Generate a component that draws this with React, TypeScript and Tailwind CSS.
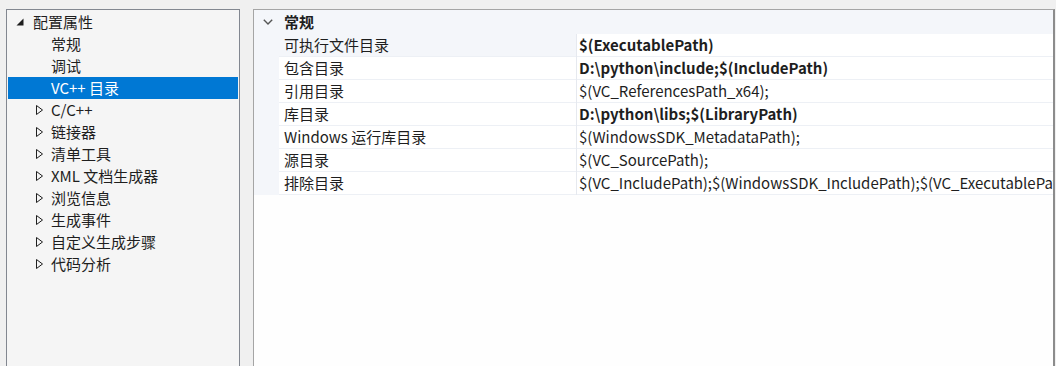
import React from "react";

const font = { fontFamily: '"Noto Sans CJK SC", sans-serif' };

type TreeItem = { label: string; kind: "root" | "child" | "selected" | "collapsed" };

const tree: TreeItem[] = [
  { label: "配置属性", kind: "root" },
  { label: "常规", kind: "child" },
  { label: "调试", kind: "child" },
  { label: "VC++ 目录", kind: "selected" },
  { label: "C/C++", kind: "collapsed" },
  { label: "链接器", kind: "collapsed" },
  { label: "清单工具", kind: "collapsed" },
  { label: "XML 文档生成器", kind: "collapsed" },
  { label: "浏览信息", kind: "collapsed" },
  { label: "生成事件", kind: "collapsed" },
  { label: "自定义生成步骤", kind: "collapsed" },
  { label: "代码分析", kind: "collapsed" },
];

const rows: { label: string; value: string; bold: boolean; hl?: boolean }[] = [
  { label: "可执行文件目录", value: "$(ExecutablePath)", bold: true, hl: true },
  { label: "包含目录", value: "D:\\python\\include;$(IncludePath)", bold: true },
  { label: "引用目录", value: "$(VC_ReferencesPath_x64);", bold: false },
  { label: "库目录", value: "D:\\python\\libs;$(LibraryPath)", bold: true },
  { label: "Windows 运行库目录", value: "$(WindowsSDK_MetadataPath);", bold: false },
  { label: "源目录", value: "$(VC_SourcePath);", bold: false },
  {
    label: "排除目录",
    value: "$(VC_IncludePath);$(WindowsSDK_IncludePath);$(VC_ExecutablePath_x64);$(VC_LibraryPath_x64)",
    bold: false,
  },
];

function RootTri() {
  return (
    <svg width="8" height="8" viewBox="0 0 8 8" className="shrink-0">
      <polygon points="7.5,0.5 7.5,7.5 0.5,7.5" fill="#1e1e1e" />
    </svg>
  );
}

function CollapsedTri() {
  return (
    <svg width="8" height="10" viewBox="0 0 8 10" className="shrink-0">
      <polygon points="0.5,0.5 6.5,5 0.5,9.5" fill="none" stroke="#1e1e1e" strokeWidth="1" />
    </svg>
  );
}

export default function App() {
  return (
    <div
      className="w-[1056px] h-[366px] bg-[#f0f0f0] overflow-hidden flex items-start text-[15px] text-[#1e1e1e]"
      style={font}
    >
      {/* Left tree */}
      <div className="ml-[6px] mt-[9px] w-[234px] h-[400px] shrink-0 border border-[#828790] bg-[#f5f5f5] p-[1px]">
        {tree.map((t, i) => (
          <div
            key={i}
            className={`h-[22px] flex items-center leading-none ${
              t.kind === "selected" ? "bg-[#0078d4] text-white" : ""
            }`}
          >
            {t.kind === "root" ? (
              <>
                <div className="w-[8px] ml-[8px] flex items-center">
                  <RootTri />
                </div>
                <span className="ml-[9px] pb-[2px]">{t.label}</span>
              </>
            ) : t.kind === "collapsed" ? (
              <>
                <div className="w-[8px] ml-[28px] flex items-center">
                  <CollapsedTri />
                </div>
                <span className="ml-[7px] pb-[2px]">{t.label}</span>
              </>
            ) : (
              <span className="ml-[43px] pb-[2px]">{t.label}</span>
            )}
          </div>
        ))}
      </div>

      {/* Right property grid */}
      <div className="ml-[13px] mt-[9px] w-[802px] h-[400px] shrink-0 border border-[#a5a5a5] border-r-2 border-r-[#8c8c8c] bg-[#fefefe] overflow-hidden">
        <div className="h-[24px] flex items-center bg-[#f4f6fa] leading-none">
          <div className="w-[25px] flex justify-center pl-[2px]">
            <svg width="10" height="6" viewBox="0 0 10 6">
              <polyline points="0.8,0.8 5,5 9.2,0.8" fill="none" stroke="#555" strokeWidth="1.4" />
            </svg>
          </div>
          <span className="ml-[5px] font-bold pb-[2px]">常规</span>
        </div>
        {rows.map((r, i) => (
          <div key={i} className="h-[23px] flex leading-none">
            <div className="w-[25px] shrink-0 bg-[#f4f6fa]" />
            <div
              className={`w-[297px] shrink-0 flex items-center pl-[5px] pb-[2px] border-b border-[#edf0f5] ${
                r.hl ? "bg-[#f4f6fa]" : "bg-white"
              }`}
            >
              {r.label}
            </div>
            <div className="w-[1px] shrink-0 bg-[#e6e9ef]" />
            <div
              className={`flex-1 min-w-0 flex items-center pl-[2px] pb-[2px] whitespace-nowrap overflow-hidden border-b border-[#edf0f5] bg-white ${
                r.bold ? "font-bold" : ""
              }`}
            >
              {r.value}
            </div>
          </div>
        ))}
      </div>
    </div>
  );
}
